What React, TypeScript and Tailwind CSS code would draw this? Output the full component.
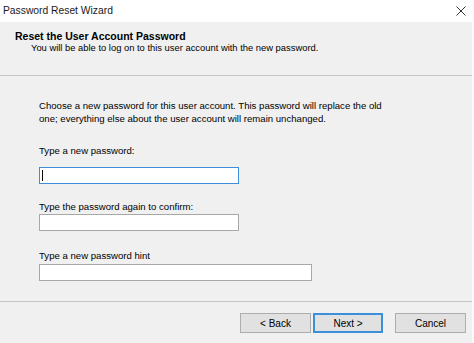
import { useState } from 'react'

function Field({ label, className, labelClass, inputClass, focused }: {
  label: string
  className?: string
  labelClass: string
  inputClass: string
  focused?: boolean
}) {
  const [value, setValue] = useState('')
  return (
    <div className={className}>
      <div className={`h-[13px] leading-[13px] ${labelClass}`}>{label}</div>
      <div className={`relative h-[17px] bg-white border ${focused ? 'border-[#3c8fd9]' : 'border-[#a8a8a8]'} ${inputClass}`}>
        <input
          type="password"
          value={value}
          onChange={e => setValue(e.target.value)}
          className="w-full h-full px-[2px] bg-transparent outline-none text-[10px]"
        />
        {focused && value === '' && (
          <span className="absolute left-[2px] top-[2px] w-px h-[11px] bg-black" />
        )}
      </div>
    </div>
  )
}

export default function App() {
  return (
    <div className="w-[474px] h-[343px] flex flex-col bg-[#f0f0f0] text-black font-['Liberation_Sans',Arial,sans-serif] border-r-2 border-r-[#fafafa] overflow-hidden">
      {/* title bar */}
      <div className="h-[22px] shrink-0 bg-white flex items-center pl-[3px] pr-[6px]">
        <span className="text-[10.3px] text-[#1a1a1a]">Password Reset Wizard</span>
        <svg width="10" height="10" viewBox="0 0 10 10" className="ml-auto">
          <path d="M0.5 0.5 L9.5 9.5 M9.5 0.5 L0.5 9.5" stroke="#333" strokeWidth="1" fill="none" />
        </svg>
      </div>

      {/* header */}
      <div className="h-[54px] shrink-0 border-b border-[#c4c4c4] pt-[9px]">
        <div className="pl-[15px] text-[10.5px] leading-[11px] font-bold">Reset the User Account Password</div>
        <div className="pl-[31px] text-[9.4px] leading-[11px]">You will be able to log on to this user account with the new password.</div>
      </div>

      {/* body */}
      <div className="flex-1 flex flex-col pl-[39px]">
        <p className="mt-[23px] text-[9.6px] leading-[13px]">
          Choose a new password for this user account. This password will replace the old<br />
          one; everything else about the user account will remain unchanged.
        </p>
        <Field label="Type a new password:" className="mt-[19px] text-[9.6px]" labelClass="mb-[10px]" inputClass="w-[200px]" focused />
        <Field label="Type the password again to confirm:" className="mt-[16px] text-[9.6px]" labelClass="mb-[1px]" inputClass="w-[200px]" />
        <Field label="Type a new password hint" className="mt-[18px] text-[9.6px]" labelClass="mb-[2px]" inputClass="w-[273px]" />
      </div>

      {/* footer */}
      <div className="h-[42px] shrink-0 border-t border-[#c4c4c4] flex items-start pt-[11px] pl-[240px]">
        <button className="w-[71px] h-[20px] bg-[#e1e1e1] border border-[#adadad] text-[10px]">&lt; Back</button>
        <button className="ml-[2px] w-[70px] h-[20px] bg-[#e1e1e1] border-2 border-[#3c8fd9] text-[10px]">Next &gt;</button>
        <button className="ml-[12px] w-[71px] h-[20px] bg-[#e1e1e1] border border-[#adadad] text-[10px]">Cancel</button>
      </div>
    </div>
  )
}
